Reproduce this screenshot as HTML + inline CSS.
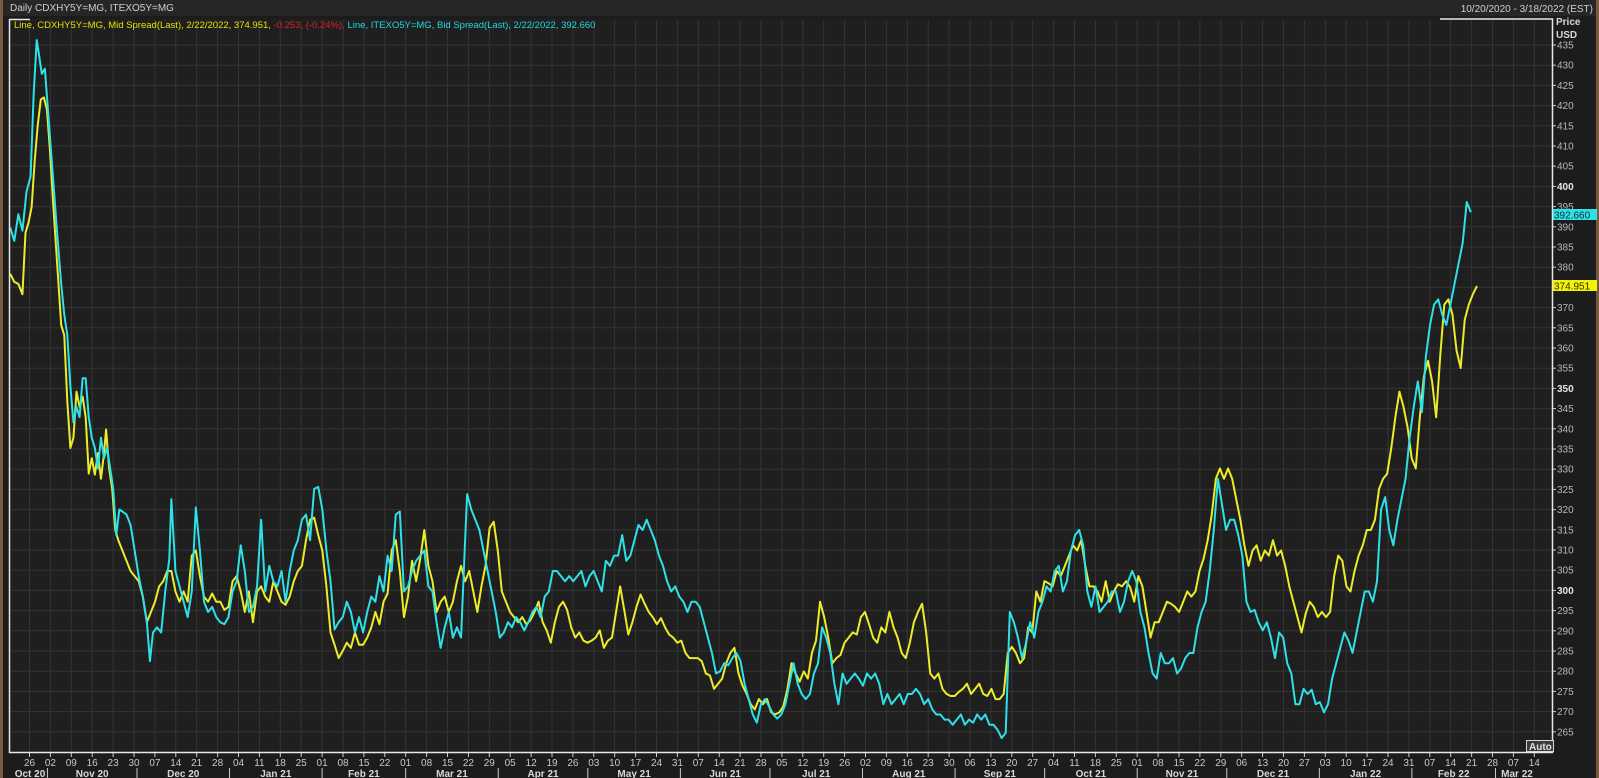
<!DOCTYPE html>
<html><head><meta charset="utf-8"><style>
html,body{margin:0;padding:0;background:#1c1c1c;width:1599px;height:778px;overflow:hidden;font-family:"Liberation Sans",sans-serif}
svg{position:absolute;left:0;top:0}
</style></head><body>
<svg id="s" width="1599" height="778" xmlns="http://www.w3.org/2000/svg" font-family="Liberation Sans, sans-serif">
<rect width="1599" height="778" fill="#1c1c1c"/>
<rect x="0" y="0" width="1599" height="16" fill="#262626"/>
<rect x="0" y="0" width="3" height="778" fill="#7a5a3c"/>
<rect x="1596" y="0" width="3" height="778" fill="#7a5a3c"/>
<rect x="9" y="19" width="1543" height="733" fill="#1f1f1f"/>
<g id="grid" stroke="#343434" stroke-width="1"></g>
<text x="10" y="11" fill="#cfcfcf" font-size="10">Daily CDXHY5Y=MG, ITEXO5Y=MG</text>
<text x="1593" y="12" fill="#cfcfcf" font-size="10" text-anchor="end">10/20/2020 - 3/18/2022 (EST)</text>
<text x="14" y="28" font-size="9.5"><tspan fill="#e8e000">Line, CDXHY5Y=MG, Mid Spread(Last), 2/22/2022, 374.951, </tspan><tspan fill="#e02020">-0.253, (-0.24%), </tspan><tspan fill="#20d8e0">Line, ITEXO5Y=MG, Bid Spread(Last), 2/22/2022, 392.660</tspan></text>
<g transform="matrix(1.02 0 0 1.025 0 -3.05)" fill="none" stroke-width="2" stroke-linejoin="round">
<polyline vector-effect="non-scaling-stroke" stroke="#ecec2a" points="10,270 14,278 18,280 22,290 25,230 28,220 31,205 34,160 37,125 40,100 43,98 46,110 49,150 52,200 56,260 60,320 63,330 66,395 69,440 72,430 75,385 78,400 81,390 84,410 87,465 90,450 93,466 96,445 99,470 102,445 104,422 107,460 110,480 113,520 116,530 120,540 124,550 128,560 132,565 136,570 140,585 144,610 148,600 152,590 156,575 160,570 164,560 168,560 172,580 176,590 180,580 184,590 188,545 192,540 196,565 200,585 204,590 208,582 212,590 216,590 220,598 224,595 228,570 232,565 236,580 240,600 244,580 248,610 252,580 256,575 260,585 264,590 268,570 272,580 276,590 280,593 284,585 288,570 292,560 296,555 300,530 304,510 308,508 312,525 316,540 320,575 324,620 328,632 332,645 336,638 340,630 344,635 348,620 352,632 356,632 360,625 364,615 368,600 372,612 376,590 380,582 384,540 388,530 392,560 396,605 400,585 404,550 408,570 412,548 416,520 420,555 424,570 428,600 432,590 436,585 440,600 444,590 448,570 452,555 456,570 460,560 464,580 468,600 472,575 476,555 480,518 484,512 488,540 492,580 496,590 500,600 504,605 508,610 512,605 516,612 520,608 524,600 528,590 532,610 536,618 540,630 544,610 548,595 552,590 556,598 560,615 564,625 568,620 572,628 576,630 580,628 584,625 588,618 592,635 596,628 600,625 604,600 608,575 612,598 616,622 620,610 624,595 628,583 632,592 636,600 640,605 644,612 648,606 652,615 656,622 660,625 664,630 668,628 672,640 676,645 680,645 684,645 688,648 692,660 696,662 700,675 704,670 708,665 712,650 716,640 720,635 724,660 728,672 732,680 736,690 740,695 744,685 748,690 752,685 756,698 760,700 764,698 768,692 772,675 776,650 780,660 784,668 788,658 792,665 796,640 800,628 804,590 808,605 812,625 816,650 820,645 824,642 828,630 832,625 836,620 840,622 844,605 848,600 852,612 856,625 860,630 864,615 868,620 872,600 876,615 880,625 884,640 888,645 892,630 896,610 900,600 904,592 908,620 912,660 916,665 920,660 924,675 928,680 932,682 936,682 940,678 944,675 948,670 952,680 956,675 960,670 964,680 968,682 972,675 976,685 980,685 984,680 988,640 992,634 996,640 1000,650 1004,645 1008,615 1012,620 1016,580 1020,590 1024,570 1028,572 1032,575 1036,560 1040,565 1044,555 1048,545 1052,535 1056,540 1060,530 1064,555 1068,575 1072,575 1076,580 1080,590 1084,570 1088,590 1092,580 1096,573 1100,575 1104,570 1108,576 1112,590 1116,565 1120,575 1124,600 1128,625 1132,610 1136,610 1140,600 1144,590 1148,592 1152,595 1156,600 1160,590 1164,580 1168,585 1172,580 1176,560 1180,548 1184,530 1188,505 1192,470 1196,460 1200,470 1204,460 1208,470 1212,490 1216,510 1220,535 1224,555 1228,540 1232,535 1236,550 1240,540 1244,545 1248,530 1252,545 1256,540 1260,555 1264,575 1268,590 1272,605 1276,620 1280,602 1284,590 1288,595 1292,605 1296,600 1300,605 1304,600 1308,565 1312,545 1316,550 1320,575 1324,580 1328,560 1332,545 1336,535 1340,520 1344,520 1348,510 1352,480 1356,470 1360,465 1364,440 1368,410 1372,385 1376,400 1380,420 1384,450 1388,460 1392,410 1396,370 1400,355 1404,375 1408,410 1412,350 1416,300 1420,295 1424,310 1428,345 1432,362 1436,315 1440,300 1444,290 1448,282"/>
<polyline vector-effect="non-scaling-stroke" stroke="#2ee0e8" points="10,225 14,238 18,212 22,228 26,190 30,175 33,95 36,42 38,55 41,75 44,70 47,110 50,150 53,190 56,230 60,280 63,310 66,330 69,380 72,415 75,400 78,410 81,372 84,372 87,410 90,430 93,440 96,460 99,430 102,450 105,440 108,460 111,480 114,525 117,500 120,502 124,505 128,515 132,540 136,565 140,585 144,610 147,648 150,620 154,615 158,620 162,580 166,548 168,490 172,560 176,575 180,590 184,605 188,580 192,498 196,540 200,590 204,600 208,595 212,605 216,610 220,612 224,605 228,580 232,570 236,535 240,560 244,600 248,595 252,575 256,510 260,580 264,555 268,570 272,575 276,560 280,590 284,560 288,540 292,530 296,510 300,505 304,530 308,480 312,478 316,500 320,540 324,570 328,617 332,610 336,605 340,590 344,600 348,620 352,605 356,620 360,600 364,585 368,590 372,565 376,580 380,545 384,560 388,505 392,502 396,580 400,575 404,560 408,550 412,545 416,540 420,575 424,580 428,610 432,635 436,615 440,600 444,625 448,615 452,625 456,530 458,485 462,500 466,510 470,520 474,540 478,560 482,580 486,600 490,625 494,620 498,610 502,615 506,605 510,610 514,618 518,610 522,600 526,595 530,605 534,585 538,580 542,560 546,560 550,565 554,570 558,565 562,570 566,565 570,560 574,575 578,565 582,560 586,570 590,580 594,550 598,555 602,545 606,545 610,525 614,550 618,545 622,530 626,515 630,520 634,510 638,520 642,530 646,545 650,555 654,570 658,580 662,575 666,585 670,590 674,600 678,590 682,590 686,595 690,610 694,625 698,640 702,660 706,658 710,650 714,652 718,645 722,640 726,648 730,670 734,685 738,700 742,708 746,690 750,685 754,692 758,700 762,704 766,700 770,690 774,670 778,650 782,670 786,680 790,685 794,680 798,660 802,650 806,615 810,625 814,640 818,670 822,690 826,660 830,670 834,665 838,660 842,665 846,672 850,660 854,665 858,660 862,670 866,690 870,680 874,690 878,685 882,680 886,690 890,680 894,680 898,675 902,680 906,690 910,685 914,695 918,700 922,700 926,705 930,705 934,710 938,705 942,700 946,710 950,705 954,708 958,700 962,705 966,700 970,710 974,710 978,715 982,723 986,718 990,600 994,610 998,625 1002,645 1006,630 1010,610 1014,625 1018,600 1022,590 1026,575 1030,580 1034,560 1038,555 1042,580 1046,570 1050,540 1054,525 1058,520 1062,535 1066,580 1070,595 1074,575 1078,600 1082,595 1086,590 1090,580 1094,580 1098,600 1102,590 1106,570 1110,560 1114,570 1118,600 1122,615 1126,640 1130,660 1134,665 1138,640 1142,650 1146,650 1150,645 1154,660 1158,655 1162,645 1166,640 1170,640 1174,615 1178,600 1182,590 1186,560 1190,520 1194,470 1198,495 1202,520 1206,510 1210,510 1214,525 1218,545 1222,590 1226,600 1230,598 1234,610 1238,618 1242,610 1246,625 1250,645 1254,620 1258,625 1262,650 1266,660 1270,690 1274,690 1278,675 1282,680 1286,676 1290,690 1294,688 1298,698 1302,690 1306,665 1310,650 1314,635 1318,620 1322,628 1326,640 1330,620 1334,600 1338,580 1342,580 1346,590 1350,570 1354,500 1358,488 1362,520 1366,535 1370,510 1374,490 1378,470 1382,430 1386,400 1390,375 1394,405 1398,350 1402,320 1406,300 1410,295 1414,310 1418,320 1422,300 1426,280 1430,260 1434,240 1438,200 1442,210"/>
</g>
<g id="axes"></g>
<path d="M9.5 19 V752.5 H1552.5 V19 H1440" stroke="#e8e8e8" stroke-width="1.5" fill="none"/>
<path d="M9.5 19.5 H30" stroke="#e8e8e8" stroke-width="1.5"/>
<text x="1556" y="25" fill="#d8d8d8" font-size="10" font-weight="bold">Price</text>
<text x="1556" y="38" fill="#d8d8d8" font-size="10" font-weight="bold">USD</text>
<rect x="1553" y="209" width="44" height="11" fill="#2ee0e8"/>
<text x="1554" y="218.5" fill="#103030" font-size="10">392.660</text>
<rect x="1553" y="280" width="44" height="11" fill="#f2f20a"/>
<text x="1554" y="289.5" fill="#303000" font-size="10">374.951</text>
<rect x="1526" y="740" width="28" height="12" fill="#d8d8d8"/>
<rect x="1527" y="741" width="26" height="10" fill="#3a3a3a"/>
<text x="1529" y="750" fill="#e0e0e0" font-size="10" font-weight="bold">Auto</text>
</svg>
<script>
var ns="http://www.w3.org/2000/svg";
var g=document.getElementById('grid'),a=document.getElementById('axes');
function el(p,t,at,txt){var e=document.createElementNS(ns,t);for(var k in at)e.setAttribute(k,at[k]);if(txt)e.textContent=txt;p.appendChild(e);return e;}
for(var v=265;v<=435;v+=5){var y=45+(435-v)*4.04;
 el(g,'line',{x1:10,x2:1552,y1:y,y2:y});
 el(a,'line',{x1:1552,x2:1556,y1:y,y2:y,stroke:'#ccc'});
 var b=(v%50==0);
 el(a,'text',{x:1557,y:y+3.5,fill:b?'#e6e6e6':'#b8b8b8','font-size':'10','font-weight':b?'bold':'normal'},String(v));}
var x0=29.5,pw=20.9/7;var base=Date.UTC(2020,9,26);
function X(d){return x0+(d-base)/864e5*pw;}
for(var k=0;k<=72;k++){var d=base+k*7*864e5;var x=x0+k*20.9;var dt=new Date(d);
 if(x<1552) el(g,'line',{x1:x,x2:x,y1:20,y2:752});
 el(a,'line',{x1:x,x2:x,y1:753,y2:757,stroke:'#ccc'});
 var s=('0'+dt.getUTCDate()).slice(-2);
 el(a,'text',{x:x,y:766,fill:'#c8c8c8','font-size':'10','text-anchor':'middle'},s);}
var mn=['Jan','Feb','Mar','Apr','May','Jun','Jul','Aug','Sep','Oct','Nov','Dec'];
for(var i=0;i<18;i++){var yr=2020+Math.floor((9+i)/12),m=(9+i)%12;
 var s0=i==0?9:X(Date.UTC(yr,m,1));var ny=2020+Math.floor((10+i)/12),nm=(10+i)%12;
 var s1=X(Date.UTC(ny,nm,1));
 if(i>0) el(a,'line',{x1:s0,x2:s0,y1:768,y2:778,stroke:'#ccc'});
 var cx=i==0?30:(s0+s1)/2; if(i==17)cx=1517;
 el(a,'text',{x:cx,y:777,fill:'#d8d8d8','font-size':'10','font-weight':'bold','text-anchor':'middle'},mn[m]+' '+String(yr).slice(2));}
</script>
</body></html>
